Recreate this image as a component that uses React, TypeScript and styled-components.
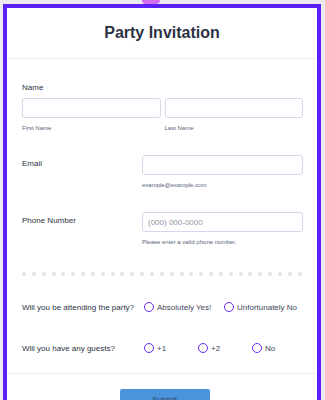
import React from 'react'
import styled, { createGlobalStyle } from 'styled-components'

const GlobalStyle = createGlobalStyle`
  html, body {
    margin: 0;
    padding: 0;
    background: #ebebef;
    font-family: 'Liberation Sans', Arial, sans-serif;
    color: #2c3345;
  }
  * {
    box-sizing: border-box;
  }
`

interface RadioQuestion {
  question: string
  options: string[]
  optionWidth: number
}

const radioQuestions: RadioQuestion[] = [
  {
    question: 'Will you be attending the party?',
    options: ['Absolutely Yes!', 'Unfortunately No'],
    optionWidth: 80,
  },
  {
    question: 'Will you have any guests?',
    options: ['+1', '+2', 'No'],
    optionWidth: 54,
  },
]

const App = (): JSX.Element => {
  return (
    <>
      <GlobalStyle />
      <Page>
        <Blob />
        <Frame>
          <Header>
            <Title>Party Invitation</Title>
          </Header>
          <Body>
            <Label>Name</Label>
            <NameGrid>
              <div>
                <Input />
                <SubLabel>First Name</SubLabel>
              </div>
              <div>
                <Input />
                <SubLabel>Last Name</SubLabel>
              </div>
            </NameGrid>

            <SideRow>
              <SideLabel>Email</SideLabel>
              <div>
                <Input />
                <SubLabel>example@example.com</SubLabel>
              </div>
            </SideRow>

            <SideRow>
              <SideLabel>Phone Number</SideLabel>
              <div>
                <Input placeholder="(000) 000-0000" />
                <SubLabel>Please enter a valid phone number.</SubLabel>
              </div>
            </SideRow>

            <Dots>
              {Array.from({ length: 29 }).map((_, i) => (
                <Dot key={i} />
              ))}
            </Dots>

            {radioQuestions.map((q, qi) => (
              <RadioRow key={q.question} first={qi === 0}>
                <Question>{q.question}</Question>
                {q.options.map((opt) => (
                  <Option key={opt} width={q.optionWidth}>
                    <Circle />
                    <span>{opt}</span>
                  </Option>
                ))}
              </RadioRow>
            ))}
          </Body>
          <Footer>
            <SubmitButton>Submit</SubmitButton>
          </Footer>
        </Frame>
      </Page>
    </>
  )
}

const Page = styled.div`
  position: relative;
  width: 325px;
  height: 400px;
  overflow: hidden;
  padding: 4px 0 0 3px;
`

const Blob = styled.div`
  position: absolute;
  top: 0;
  left: 142px;
  width: 18px;
  height: 4px;
  border-radius: 0 0 9px 9px;
  background: #d46cf2;
`

const Frame = styled.div`
  width: 318px;
  border: 4px solid #5b1ff8;
  background: #ffffff;
`

const Header = styled.div`
  height: 51px;
  display: flex;
  align-items: center;
  justify-content: center;
  margin: 0 1px;
  border-bottom: 1px solid #ececf2;
`

const Title = styled.h1`
  margin: 0;
  font-size: 16px;
  line-height: 20px;
  font-weight: bold;
  color: #2c3345;
`

const Body = styled.div`
  padding: 24px 14px 19px 15px;
`

const Label = styled.div`
  font-size: 8px;
  line-height: 10px;
  color: #2c3345;
  margin-bottom: 5px;
`

const NameGrid = styled.div`
  display: grid;
  grid-template-columns: 1fr 1fr;
  column-gap: 4px;
`

const Input = styled.input`
  display: block;
  width: 100%;
  height: 20px;
  margin: 0;
  padding: 0 5px;
  border: 1px solid #d9d6ec;
  border-radius: 3px;
  background: #ffffff;
  font-family: 'Liberation Sans', Arial, sans-serif;
  font-size: 8px;
  color: #2c3345;
  outline: none;

  &::placeholder {
    color: #8f96a3;
  }
`

const SubLabel = styled.div`
  margin-top: 6px;
  font-size: 6px;
  line-height: 8px;
  color: #57647e;
`

const SideRow = styled.div`
  display: grid;
  grid-template-columns: 120px 1fr;
  margin-top: 23px;
`

const SideLabel = styled.div`
  padding-top: 4px;
  font-size: 8px;
  line-height: 10px;
  color: #2c3345;
`

const Dots = styled.div`
  display: flex;
  justify-content: space-between;
  margin-top: 26px;
  padding-right: 1px;
`

const Dot = styled.span`
  width: 4px;
  height: 4px;
  border-radius: 50%;
  background: #e3e3e8;
`

const RadioRow = styled.div<{ first?: boolean }>`
  display: flex;
  align-items: center;
  height: 12px;
  margin-top: ${(props) => (props.first ? '25px' : '29px')};
  font-size: 8px;
  color: #2c3345;
`

const Question = styled.div`
  width: 122px;
  flex-shrink: 0;
`

const Option = styled.div<{ width: number }>`
  display: flex;
  align-items: center;
  width: ${(props) => props.width}px;
  flex-shrink: 0;
  gap: 3px;
  color: #3f4759;
`

const Circle = styled.span`
  width: 10px;
  height: 10px;
  border: 1.5px solid #6a2af4;
  border-radius: 50%;
  background: #ffffff;
  flex-shrink: 0;
`

const Footer = styled.div`
  display: flex;
  justify-content: center;
  margin: 0 1px;
  padding: 15px 0 0 5px;
  border-top: 1px solid #ececf2;
`

const SubmitButton = styled.button`
  width: 90px;
  height: 26px;
  padding: 6px 0 0;
  border: none;
  border-radius: 2px;
  background: #4b94dc;
  font-family: 'Liberation Sans', Arial, sans-serif;
  font-size: 8px;
  line-height: 10px;
  color: #2f4a6d;
  display: flex;
  justify-content: center;
  align-items: flex-start;
`

export default App
